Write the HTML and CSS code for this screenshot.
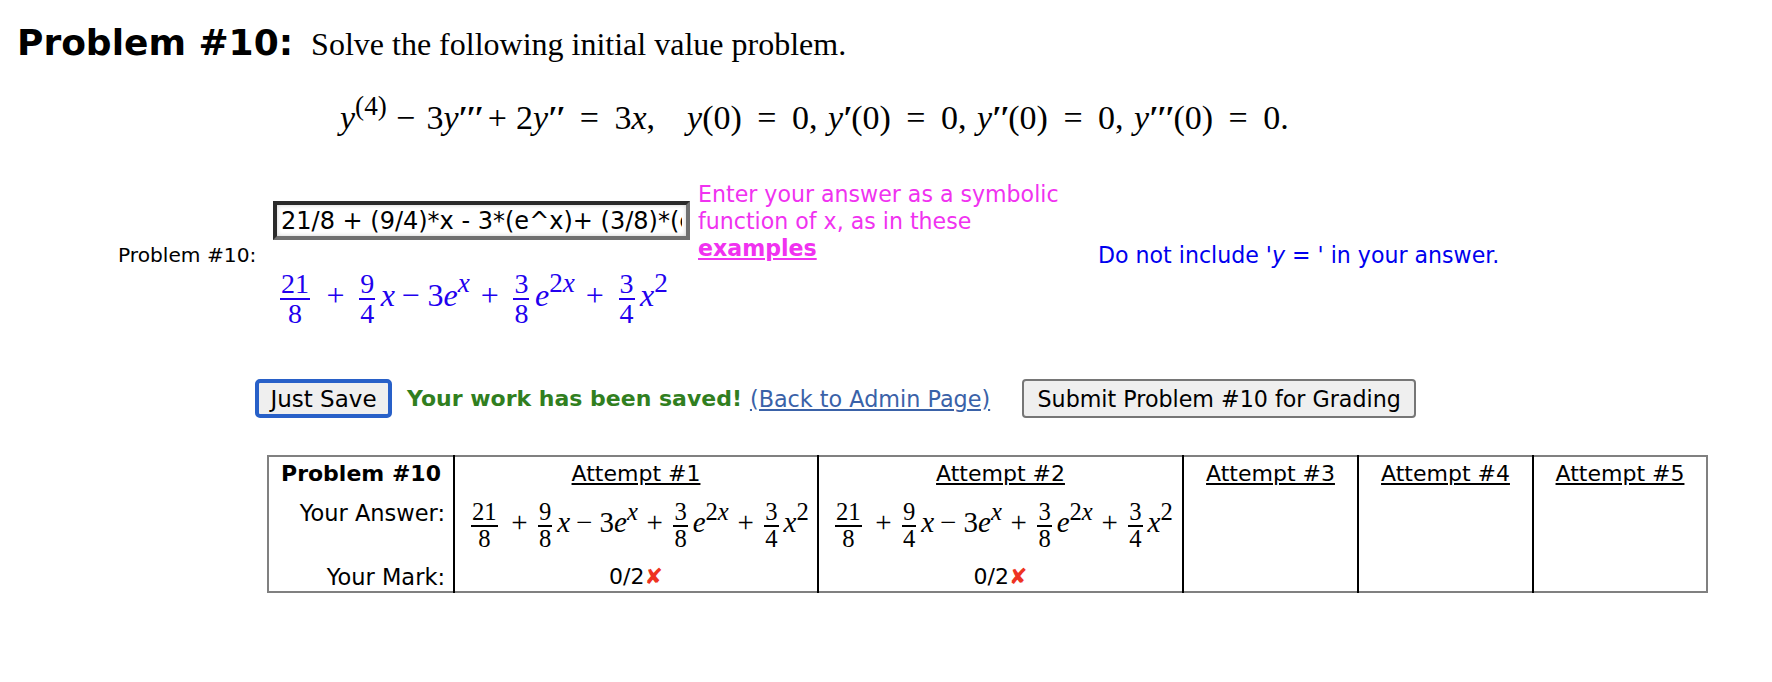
FILE: index.html
```html
<!DOCTYPE html>
<html lang="en">
<head>
<meta charset="utf-8">
<title>Problem #10</title>
<link rel="stylesheet" href="styles.css">
</head>
<body>
<section class="statement">
  <h1 class="title">Problem #10:</h1>
  <p class="prompt">Solve the following initial value problem.</p>
</section>
<p class="equation math"><i>y</i><sup class="up">(4)</sup><span class="mi">−</span>3<i>y</i><span class="pr">′′′</span><span class="pl">+</span>2<i>y</i><span class="pr">′′</span><span class="eq">=</span>3<i>x</i>,<span class="quad"></span><i>y</i>(0)<span class="eq">=</span>0, <i>y</i><span class="pr">′</span>(0)<span class="eq">=</span>0, <i>y</i><span class="pr">′′</span>(0)<span class="eq">=</span>0, <i>y</i><span class="pr">′′′</span>(0)<span class="eq">=</span>0.</p>
<div class="answer-row">
  <div class="label">Problem #10:</div>
  <div class="entry">
    <input class="answer" type="text" value="21/8 + (9/4)*x - 3*(e^x)+ (3/8)*(e^(2*x)) + (3/4)*x^2">
    <div class="math preview"><span class="frac"><span class="n">21</span><span class="d">8</span></span><span class="pl">+</span><span class="frac"><span class="n">9</span><span class="d">4</span></span><i>x</i><span class="mi">−</span>3<i>e</i><sup class="up"><i>x</i></sup><span class="pl">+</span><span class="frac"><span class="n">3</span><span class="d">8</span></span><i>e</i><sup class="up">2<i>x</i></sup><span class="pl">+</span><span class="frac"><span class="n">3</span><span class="d">4</span></span><i>x</i><sup class="up">2</sup></div>
  </div>
  <div class="hint">Enter your answer as a symbolic function of x, as in these <a class="hint-link" href="#">examples</a></div>
  <div class="note">Do not include '<i>y</i> = ' in your answer.</div>
</div>
<div class="actions">
  <button class="btn btn-focus" type="button">Just Save</button>
  <strong class="saved">Your work has been saved!</strong>
  <a class="back" href="#">(Back to Admin Page)</a>
  <button class="btn btn-submit" type="button">Submit Problem #10 for Grading</button>
</div>
<table class="attempts">
  <colgroup><col class="c0"><col class="c1"><col class="c2"><col class="c3"><col class="c4"><col class="c5"></colgroup>
  <tr class="head">
    <th class="rowhead">Problem #10</th>
    <td><u>Attempt #1</u></td><td><u>Attempt #2</u></td><td><u>Attempt #3</u></td><td><u>Attempt #4</u></td><td><u>Attempt #5</u></td>
  </tr>
  <tr class="ans">
    <td class="rowlabel top">Your Answer:</td>
    <td class="math small"><span class="frac"><span class="n">21</span><span class="d">8</span></span><span class="pl">+</span><span class="frac"><span class="n">9</span><span class="d">8</span></span><i>x</i><span class="mi">−</span>3<i>e</i><sup class="up"><i>x</i></sup><span class="pl">+</span><span class="frac"><span class="n">3</span><span class="d">8</span></span><i>e</i><sup class="up">2<i>x</i></sup><span class="pl">+</span><span class="frac"><span class="n">3</span><span class="d">4</span></span><i>x</i><sup class="up">2</sup></td>
    <td class="math small"><span class="frac"><span class="n">21</span><span class="d">8</span></span><span class="pl">+</span><span class="frac"><span class="n">9</span><span class="d">4</span></span><i>x</i><span class="mi">−</span>3<i>e</i><sup class="up"><i>x</i></sup><span class="pl">+</span><span class="frac"><span class="n">3</span><span class="d">8</span></span><i>e</i><sup class="up">2<i>x</i></sup><span class="pl">+</span><span class="frac"><span class="n">3</span><span class="d">4</span></span><i>x</i><sup class="up">2</sup></td>
    <td></td><td></td><td></td>
  </tr>
  <tr class="mark">
    <td class="rowlabel">Your Mark:</td>
    <td>0/2<span class="cross">✘</span></td><td>0/2<span class="cross">✘</span></td><td></td><td></td><td></td>
  </tr>
</table>
</body>
</html>
```
FILE: styles.css
```css
* { box-sizing: border-box; }
html, body { margin: 0; padding: 0; }
body {
  width: 1772px;
  height: 682px;
  overflow: hidden;
  background: #fff;
  color: #000;
  font-family: "DejaVu Sans", Verdana, sans-serif;
  font-size: 22px;
}
.statement { display: flex; align-items: baseline; padding: 22px 0 0 17px; height: 76px; }
.title { margin: 0; font-size: 36px; line-height: 42px; font-weight: 700; }
.prompt { margin: 0 0 0 18px; font: 32px/42px "Liberation Serif", serif; }
.math { font-family: "Liberation Serif", serif; }
.math sup.up { font-size: 0.85em; vertical-align: 0.52em; line-height: 0; }
.equation { margin: 0; padding: 20px 0 0 340px; height: 99px; font-size: 34px; line-height: 44px; white-space: nowrap; word-spacing: 2px; }
.equation sup.up { font-size: 0.8em; }
.equation .mi { margin: 0 .33em 0 .27em; }
.equation .pl { margin: 0 .27em 0 .15em; }
.eq { margin: 0 15.5px; }
.quad { display: inline-block; width: 32px; }
.pr { font-weight: 700; letter-spacing: -1.5px; }
.answer-row { display: flex; align-items: center; height: 160px; padding-left: 118px; }
.label { width: 155px; font-size: 20.2px; }
.entry { width: 425px; display: flex; flex-direction: column; padding-top: 26px; height: 160px; }
.answer {
  width: 417px; height: 39px; padding: 0 4px; margin: 0;
  border: 4px solid; border-color: #2a2a2a #707070 #707070 #2a2a2a;
  box-shadow: inset 0 0 4px rgba(0, 0, 0, .2);
  font: 24px "DejaVu Sans", sans-serif; color: #000; background: #fff; outline: none;
}
.preview { color: #2200ee; font-size: 32px; padding: 25px 0 0 7px; line-height: 60px; white-space: nowrap; }
.frac { display: inline-flex; flex-direction: column; align-items: center; font-size: .875em; line-height: 1; margin: 0 .2em 0 0; vertical-align: middle; }
.frac .n { align-self: stretch; text-align: center; border-bottom: 2px solid currentColor; padding: 0 1px; }
.pl { margin: 0 .46em 0 .34em; }
.mi { margin: 0 .25em 0 .2em; }
.hint { align-self: flex-start; width: 375px; margin-top: 6px; color: #f032f0; font-size: 22.1px; line-height: 27px; }
.hint-link { color: inherit; font-weight: 700; display: block; }
.note { margin-left: 25px; color: #0000ee; font-size: 22.1px; white-space: nowrap; }
.actions { display: flex; align-items: center; padding: 0 0 0 255px; height: 39px; margin-top: 44px; font-size: 22px; }
.btn { height: 39px; margin: 0; padding: 0; background: #efefef; color: #000; font: 22.2px "DejaVu Sans", sans-serif; }
.btn-focus { width: 137px; border: 4px solid #2860c8; border-radius: 5px; font-size: 23px; }
.btn-submit { width: 394px; border: 2px solid #767676; border-radius: 4px; margin-left: 32px; }
.saved { margin-left: 15px; color: #317f1f; }
.back { margin-left: 8px; color: #3a62a8; font-size: 22.3px; }
.attempts {
  margin: 37px 0 0 267px;
  width: 1439px;
  table-layout: fixed;
  border-collapse: collapse;
  border: 2px solid #808080;
  font-size: 22px;
}
.c0 { width: 186px; } .c1 { width: 364px; } .c2 { width: 365px; } .c3 { width: 175px; } .c4 { width: 175px; } .c5 { width: 174px; }
.attempts td, .attempts th { padding: 0; border-left: 2px solid #000; text-align: center; }
.attempts tr > :first-child { border-left: 0; }
.head { height: 35px; }
.attempts .head td, .attempts .head th { padding-bottom: 2px; }
.ans { height: 69px; }
.mark { height: 32px; }
.attempts .mark td { padding-top: 2px; }
.rowhead { font-weight: 700; }
.attempts .rowlabel { text-align: right; padding-right: 8px; font-size: 22.5px; }
.attempts .top { vertical-align: top; padding-top: 9px; }
.attempts .small { font-size: 29px; white-space: nowrap; text-align: left; padding-left: 16px; }
.small .frac { font-size: .85em; }
.small .pl { margin: 0 .36em 0 .3em; }
.cross { color: #ee3322; font-weight: 700; }
```
